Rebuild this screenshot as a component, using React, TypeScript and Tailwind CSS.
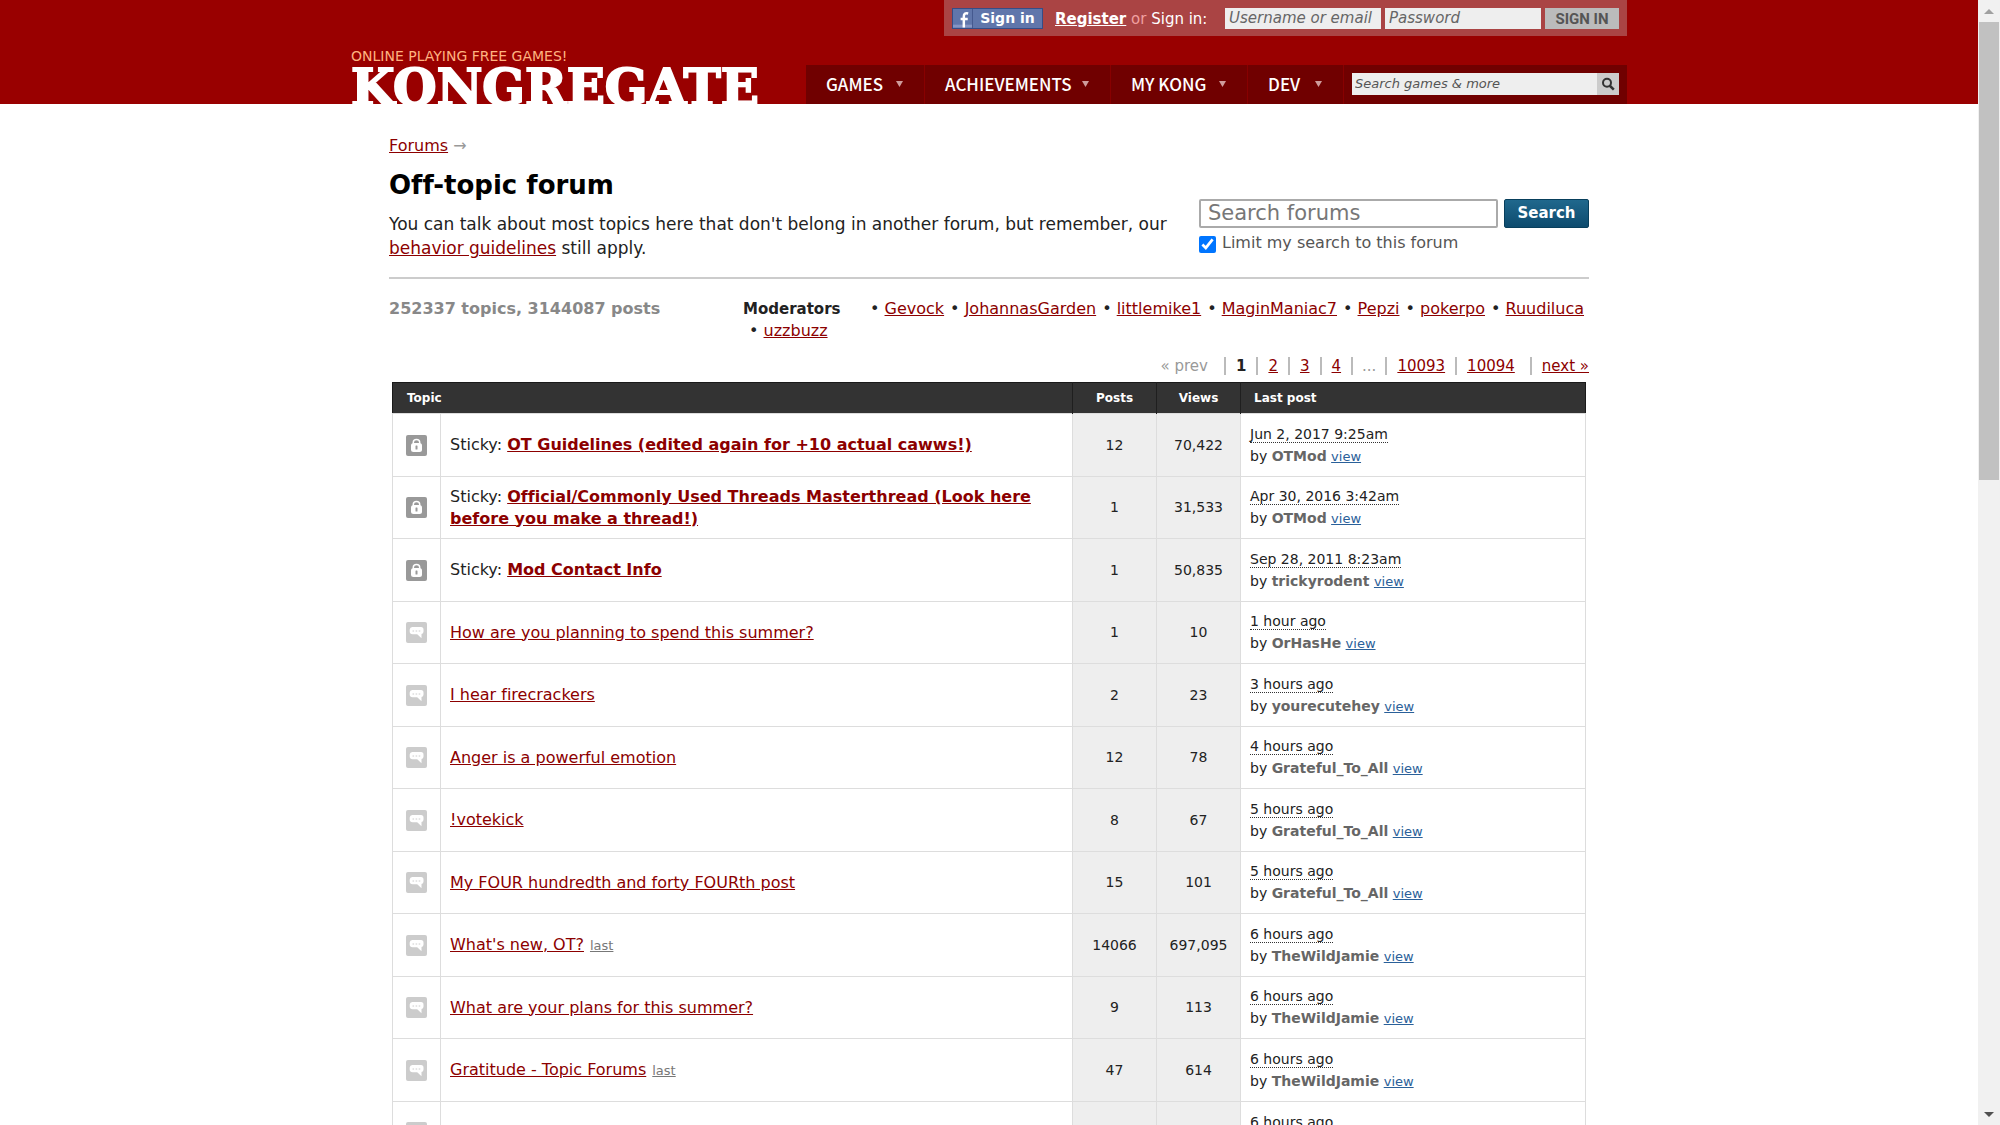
import React from "react";

const navItems = [
  { label: "GAMES", width: "w-[119px]" },
  { label: "ACHIEVEMENTS", width: "w-[186px]" },
  { label: "MY KONG", width: "w-[137px]" },
  { label: "DEV", width: "w-[96px]" },
];

const moderators = ["Gevock", "JohannasGarden", "littlemike1", "MaginManiac7", "Pepzi", "pokerpo", "Ruudiluca", "uzzbuzz"];

type Topic = {
  title: string;
  sticky?: boolean;
  last?: boolean;
  posts: string;
  views: string;
  when: string;
  by: string;
};

const topics: Topic[] = [
  { title: "OT Guidelines (edited again for +10 actual cawws!)", sticky: true, posts: "12", views: "70,422", when: "Jun 2, 2017 9:25am", by: "OTMod" },
  { title: "Official/Commonly Used Threads Masterthread (Look here before you make a thread!)", sticky: true, posts: "1", views: "31,533", when: "Apr 30, 2016 3:42am", by: "OTMod" },
  { title: "Mod Contact Info", sticky: true, posts: "1", views: "50,835", when: "Sep 28, 2011 8:23am", by: "trickyrodent" },
  { title: "How are you planning to spend this summer?", posts: "1", views: "10", when: "1 hour ago", by: "OrHasHe" },
  { title: "I hear firecrackers", posts: "2", views: "23", when: "3 hours ago", by: "yourecutehey" },
  { title: "Anger is a powerful emotion", posts: "12", views: "78", when: "4 hours ago", by: "Grateful_To_All" },
  { title: "!votekick", posts: "8", views: "67", when: "5 hours ago", by: "Grateful_To_All" },
  { title: "My FOUR hundredth and forty FOURth post", posts: "15", views: "101", when: "5 hours ago", by: "Grateful_To_All" },
  { title: "What's new, OT?", last: true, posts: "14066", views: "697,095", when: "6 hours ago", by: "TheWildJamie" },
  { title: "What are your plans for this summer?", posts: "9", views: "113", when: "6 hours ago", by: "TheWildJamie" },
  { title: "Gratitude - Topic Forums", last: true, posts: "47", views: "614", when: "6 hours ago", by: "TheWildJamie" },
  { title: "", posts: "", views: "", when: "6 hours ago", by: "" },
];

function LockIcon() {
  return (
    <svg viewBox="0 0 21 21" className="block size-[21px]" role="img" aria-label="Locked topic">
      <rect width="21" height="21" rx="2" fill="#999" />
      <path d="M7.300 8.500V7.200a3.200 2.800 0 0 1 6.400 0v1.300" fill="none" stroke="#fff" strokeWidth="1.500" />
      <rect x="5" y="8" width="11" height="9" rx="2.500" fill="#fff" />
      <rect x="9.500" y="10.500" width="2" height="4" rx=".6" fill="#999" />
    </svg>
  );
}

function BubbleIcon() {
  return (
    <svg viewBox="0 0 21 21" className="block size-[21px]" role="img" aria-label="Topic">
      <rect width="21" height="21" rx="2" fill="#ccc" />
      <path d="M6.500 5h8.500a2.500 2.500 0 0 1 2.500 2.500v2A2.500 2.500 0 0 1 15.500 12v4.200L11.200 12.200H6.500a2.800 2.800 0 0 1-2.800-2.700v-2A2.700 2.700 0 0 1 6.500 5z" fill="#fff" />
      <path d="M6.500 9h1.600M9.600 9h1.600M12.700 9h1.600" stroke="#ccc" strokeWidth="1" />
    </svg>
  );
}

function UserBar() {
  return (
    <form className="ml-auto flex h-9 w-fit items-start bg-[#aa4444] px-2 pt-2 text-white">
      <button type="button" className="flex h-[21px] w-[91px] items-center border border-[#354d86] bg-[#6076ab] text-[14px] font-bold">
        <svg viewBox="0 0 20 19" className="h-[19px] w-[20px] border-r border-[#45598f]" aria-hidden="true">
          <rect y="16" width="20" height="3" fill="#8495c4" />
          <path d="M16 4.2c-3.4-.8-4.6.6-4.6 3.2V19M8 10h7.5" fill="none" stroke="#fff" strokeWidth="2.6" />
        </svg>
        <span className="flex-1 whitespace-nowrap">Sign in</span>
      </button>
      <p className="ml-3 w-[170px] text-[15px] leading-[22px] whitespace-nowrap">
        <a href="#register" className="font-bold underline">Register</a> <span className="text-[#f0a0a0]">or</span> Sign in:
      </p>
      <input aria-label="Username or email" placeholder="Username or email" className="h-[21px] w-[156px] bg-[#eee] px-1 text-[15px] italic placeholder:text-[#666]" />
      <input aria-label="Password" type="password" placeholder="Password" className="ml-1 h-[21px] w-[156px] bg-[#eee] px-1 text-[15px] italic placeholder:text-[#666]" />
      <button type="submit" className="ml-1 h-[21px] w-[74px] bg-[#bbb] font-[Roboto] text-[15px] font-bold text-[#555]">SIGN IN</button>
    </form>
  );
}

function Header() {
  return (
    <header className="bg-[#990000]">
      <div className="mx-auto h-[104px] max-w-[1276px]">
        <UserBar />
        <div className="flex h-[68px] justify-between">
          <div className="h-[68px] pt-[10px] whitespace-nowrap">
            <p className="text-[14px] leading-5 text-[#ffb380]">ONLINE PLAYING FREE GAMES!</p>
            <a href="#home" className="block font-['DejaVu_Serif'] text-[50px] leading-[44px] font-bold text-white [-webkit-text-stroke:2px_white]">KONGREGATE</a>
          </div>
          <nav className="mt-[29px] flex h-[39px] bg-[#700000]">
            {navItems.map((n) => (
              <a key={n.label} href="#nav" className={`${n.width} flex items-center justify-between border-r border-[#880000] pr-[21px] pb-[2px] pl-5 font-['Noto_Sans_CJK_SC'] text-[17px] font-medium text-white`}>
                {n.label}
                <svg viewBox="0 0 7 6" className="h-[6px] w-[7px]" aria-hidden="true"><path d="M0 0h7L3.500 6z" fill="#cf9c9c" /></svg>
              </a>
            ))}
            <form className="mx-2 mt-2 flex h-[22px]">
              <input aria-label="Search games" placeholder="Search games & more" className="w-[245px] bg-[#eee] px-[3px] text-[13px] italic placeholder:text-[#555]" />
              <button type="submit" aria-label="Search games" className="flex w-[22px] items-center justify-center bg-[#ccc]">
                <svg viewBox="0 0 14 14" className="size-[14px]" fill="none" stroke="#333" aria-hidden="true">
                  <circle cx="6" cy="5.800" r="4" strokeWidth="2" /><path d="M8.800 8.800l4 3.800" strokeWidth="2.600" />
                </svg>
              </button>
            </form>
          </nav>
        </div>
      </div>
    </header>
  );
}

const red = "text-[#8c0000] underline";

function Pagination() {
  const item = "border-l-2 border-[#bbb] leading-[18px]";
  return (
    <nav aria-label="Pages" className="mt-3 flex h-7 items-start justify-end pt-[3px] text-[15px] text-[#999]">
      <span className="pr-4 leading-[18px]">« prev</span>
      <span className={`${item} px-[10px] font-bold text-[#222]`}>1</span>
      {["2", "3", "4"].map((p) => (
        <span key={p} className={`${item} px-[10px]`}><a href="#page" className={red}>{p}</a></span>
      ))}
      <span className={`${item} px-[9px]`}>...</span>
      <span className={`${item} px-[10px]`}><a href="#page" className={red}>10093</a></span>
      <span className={`${item} pr-[15px] pl-[10px]`}><a href="#page" className={red}>10094</a></span>
      <span className={`${item} pl-[10px]`}><a href="#page" className={red}>next »</a></span>
    </nav>
  );
}

function TopicTable() {
  return (
    <div className="px-[3px]">
      <table className="w-full table-fixed border-collapse text-[14px] text-[#222]">
        <colgroup>
          <col className="w-[48px]" /><col /><col className="w-[84px]" /><col className="w-[84px]" /><col className="w-[345px]" />
        </colgroup>
        <thead>
          <tr className="h-[31px] border border-[#1a1a1a] bg-[#333] text-[12px] text-white">
            <th colSpan={2} className="pl-[14px] text-left">Topic</th>
            <th className="border-l border-[#1f1f1f]">Posts</th>
            <th className="border-l border-[#1f1f1f]">Views</th>
            <th className="border-l border-[#1f1f1f] pl-[13px] text-left">Last post</th>
          </tr>
        </thead>
        <tbody>
          {topics.map((t, i) => (
            <tr key={i} className="odd:h-[63px] even:h-[62px]">
              <td className="border border-[#ddd] pl-[13px]">{t.sticky ? <LockIcon /> : <BubbleIcon />}</td>
              <td className="border border-[#ddd] py-0 pr-6 pl-[9px] text-[16px] leading-[22px]">
                {t.sticky && "Sticky: "}
                <a href="#topic" className={`${red} ${t.sticky ? "font-bold" : ""}`}>{t.title}</a>
                {t.last && <a href="#last" className="ml-[6px] text-[13px] text-[#777] underline">last</a>}
              </td>
              <td className="border border-[#ddd] bg-[#eee] text-center">{t.posts}</td>
              <td className="border border-[#ddd] bg-[#eee] text-center">{t.views}</td>
              <td className="border border-[#ddd] pl-[9px] text-[14px] leading-[22px]">
                <abbr className="border-b border-dotted border-[#333] leading-4 no-underline">{t.when}</abbr>
                <br />
                {t.by ? (
                  <>
                    by <strong className="text-[#666]">{t.by}</strong> <a href="#view" className="text-[13px] text-[#2a6099] underline">view</a>
                  </>
                ) : (
                  <>&nbsp;</>
                )}
              </td>
            </tr>
          ))}
        </tbody>
      </table>
    </div>
  );
}

function ForumSearch() {
  return (
    <form className="mb-[6px] w-[390px] shrink-0">
      <div className="flex gap-[6px]">
        <input aria-label="Search forums" placeholder="Search forums" className="h-[29px] min-w-0 flex-1 rounded-[2px] border-2 border-[#aaa] px-[7px] text-[21px] placeholder:text-[#777]" />
        <button type="submit" className="h-[29px] w-[85px] rounded-[2px] border border-[#083f5c] bg-linear-to-b from-[#20688d] to-[#0d4b6e] text-[15px] font-bold text-white">Search</button>
      </div>
      <label className="mt-1 flex items-center gap-[6px] text-[16px] leading-[22px] text-[#555]">
        <input type="checkbox" defaultChecked className="mt-[2px] size-[17px]" />
        Limit my search to this forum
      </label>
    </form>
  );
}

function ScrollTrack() {
  return (
    <div aria-hidden="true" className="flex w-[22px] shrink-0 flex-col items-center bg-[#f1f1f1]">
      <svg viewBox="0 0 22 22" className="size-[22px]"><path d="M6 14l5-5 5 5z" fill="#a0a0a0" /></svg>
      <div className="h-[458px] w-5 bg-[#c1c1c1]" />
      <svg viewBox="0 0 22 22" className="mt-auto size-[22px]"><path d="M6 9l5 5 5-5z" fill="#505050" /></svg>
    </div>
  );
}

export default function App() {
  return (
    <div className="flex h-screen bg-white font-['DejaVu_Sans',sans-serif] text-[#222] [font-variant-ligatures:none]">
      <div className="min-w-0 flex-1 overflow-hidden">
        <Header />
        <main className="mx-auto max-w-[1276px] px-[38px] pt-[31px]">
          <p className="text-[16px] leading-[22px]"><a href="#forums" className={red}>Forums</a> <span className="text-[#999]">→</span></p>
          <div className="flex items-end justify-between border-b-2 border-[#ccc] pb-[17px]">
            <div>
              <h1 className="mt-[10px] text-[26px] leading-9 font-bold text-black">Off-topic forum</h1>
              <p className="mt-[9px] text-[17px] leading-6">You can talk about most topics here that don't belong in another forum, but remember, our <a href="#rules" className={red}>behavior guidelines</a> still apply.</p>
            </div>
            <ForumSearch />
          </div>
          <div className="mt-[19px] flex text-[16px] leading-[22px]">
            <p className="w-[354px] shrink-0 font-bold text-[#888]">252337 topics, 3144087 posts</p>
            <div className="flex-1">
              <strong className="inline-block w-[121px] text-[15px]">Moderators</strong>
              {moderators.map((m) => (
                <span key={m} className="ml-[6px] inline-block">• <a href="#mod" className={red}>{m}</a></span>
              ))}
            </div>
          </div>
          <Pagination />
          <TopicTable />
        </main>
      </div>
      <ScrollTrack />
    </div>
  );
}
